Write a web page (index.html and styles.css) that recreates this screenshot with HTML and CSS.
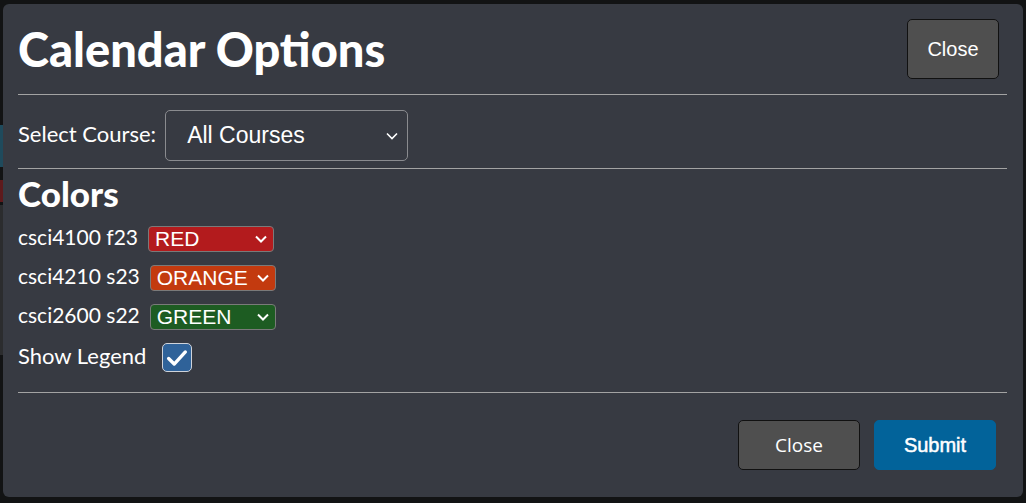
FILE: index.html
```html
<!DOCTYPE html>
<html>
<head>
<meta charset="utf-8">
<link rel="stylesheet" href="styles.css">
</head>
<body>
<div class="backdrop">
  <div class="modal">
    <div class="header">
      <h1 class="title">Calendar Options</h1>
      <button class="btn btn-close-top">Close</button>
    </div>
    <div class="course-row">
      <label class="label">Select Course:</label>
      <div class="select-big">
        <span>All Courses</span>
        <svg class="chev-big" viewBox="0 0 12 8" width="12" height="8"><path d="M1 1.5 L6 6.5 L11 1.5" fill="none" stroke="#fff" stroke-width="1.6"/></svg>
      </div>
    </div>
    <div class="colors">
      <h2 class="colors-title">Colors</h2>
      <div class="color-row">
        <span class="label row-label">csci4100 f23</span>
        <div class="color-select red"><span>RED</span><svg class="chev" viewBox="0 0 12 8" width="12" height="8"><path d="M1 1.5 L6 6.5 L11 1.5" fill="none" stroke="#fff" stroke-width="2"/></svg></div>
      </div>
      <div class="color-row">
        <span class="label row-label">csci4210 s23</span>
        <div class="color-select orange"><span>ORANGE</span><svg class="chev" viewBox="0 0 12 8" width="12" height="8"><path d="M1 1.5 L6 6.5 L11 1.5" fill="none" stroke="#fff" stroke-width="2"/></svg></div>
      </div>
      <div class="color-row">
        <span class="label row-label">csci2600 s22</span>
        <div class="color-select green"><span>GREEN</span><svg class="chev" viewBox="0 0 12 8" width="12" height="8"><path d="M1 1.5 L6 6.5 L11 1.5" fill="none" stroke="#fff" stroke-width="2"/></svg></div>
      </div>
      <div class="color-row legend-row">
        <span class="label">Show Legend</span>
        <span class="checkbox"><svg viewBox="0 0 30 28" width="28" height="26"><path d="M6 14.5 L12 20.5 L24 7.5" fill="none" stroke="#fff" stroke-width="3.6" stroke-linecap="round" stroke-linejoin="round"/></svg></span>
      </div>
    </div>
    <div class="footer">
      <button class="btn btn-close">Close</button>
      <button class="btn btn-submit">Submit</button>
    </div>
  </div>
</div>
</body>
</html>
```

FILE: styles.css
```css
html, body {
  margin: 0;
  padding: 0;
}
body {
  background-color: #121314;
  background-image:
    linear-gradient(#1f4a5c, #1f4a5c),
    linear-gradient(#5e1a1c, #5e1a1c),
    linear-gradient(#2b2c2e, #2b2c2e);
  background-size: 3px 42px, 3px 22px, 3px 150px;
  background-position: 0 125px, 0 180px, 0 205px;
  background-repeat: no-repeat;
  width: 1026px;
  height: 503px;
  overflow: hidden;
  font-family: "Lato", "Noto Sans", sans-serif;
  color: #fff;
}
.backdrop {
  padding: 4px 3px 6px 3px;
}
.modal {
  background: #373a42;
  border-radius: 6px;
  height: 493px;
  box-sizing: border-box;
  padding: 0 16px 0 15px;
  display: flex;
  flex-direction: column;
}
.header {
  display: flex;
  justify-content: space-between;
  align-items: center;
  padding: 15px 8px 15px 0;
  border-bottom: 1px solid #a3a3a3;
}
.title {
  margin: 0;
  font-size: 47px;
  font-weight: 900;
  line-height: 59px;
}
.btn {
  border-radius: 5px;
  color: #fff;
  cursor: pointer;
}
.btn-close-top {
  width: 92px;
  height: 60px;
  background: #4f4f4f;
  border: 1px solid #111;
  font-family: "Liberation Sans", Arial, sans-serif;
  font-size: 20px;
}
.course-row {
  display: flex;
  align-items: center;
  gap: 9px;
  padding: 15px 0 7px;
  border-bottom: 1px solid #a3a3a3;
}
.label {
  font-size: 22px;
  line-height: 26px;
}
.course-row .label {
  margin-top: -4px;
}
.select-big {
  width: 243px;
  height: 51px;
  box-sizing: border-box;
  border: 1px solid #8a8b8f;
  border-radius: 5px;
  display: flex;
  align-items: center;
  justify-content: space-between;
  padding: 0 9px 0 21px;
  font-family: "Liberation Sans", Arial, sans-serif;
  font-size: 23px;
}
.chev-big {
  display: block;
}
.colors {
  padding: 6px 0 20px;
  border-bottom: 1px solid #a3a3a3;
}
.colors-title {
  margin: 0 0 15px;
  font-size: 35px;
  font-weight: 900;
  line-height: 36px;
}
.color-row {
  display: flex;
  align-items: center;
  gap: 10px;
  height: 26px;
  margin-bottom: 13px;
}
.color-row .label {
  margin-top: -4px;
}
.row-label {
  font-size: 21px;
}
.color-select {
  width: 126px;
  height: 26px;
  box-sizing: border-box;
  border: 1px solid #7a7a7a;
  border-radius: 4px;
  display: flex;
  align-items: center;
  justify-content: space-between;
  padding: 0 6px 0 6px;
  font-family: "Liberation Sans", Arial, sans-serif;
  font-size: 21px;
}
.red { background: #b31b1d; }
.orange { background: #c33a0f; }
.green { background: #1d5c22; }
.legend-row {
  height: 29px;
  margin-bottom: 0;
  gap: 16px;
}
.checkbox {
  width: 30px;
  height: 29px;
  box-sizing: border-box;
  background: #2f6299;
  border: 1px solid #cfd3da;
  border-radius: 5px;
  display: flex;
  align-items: center;
  justify-content: center;
}
.footer {
  display: flex;
  justify-content: flex-end;
  gap: 14px;
  padding: 27px 11px 0 0;
}
.btn-close {
  width: 122px;
  height: 50px;
  background: #4f4f4f;
  border: 1px solid #111;
  font-family: "Open Sans", "Noto Sans", sans-serif;
  font-size: 19px;
}
.btn-submit {
  width: 122px;
  height: 50px;
  background: #02639a;
  border: 1px solid #02639a;
  font-family: "Liberation Sans", Arial, sans-serif;
  font-size: 20px;
  font-weight: 400;
  -webkit-text-stroke: 0.5px #fff;
}
```
